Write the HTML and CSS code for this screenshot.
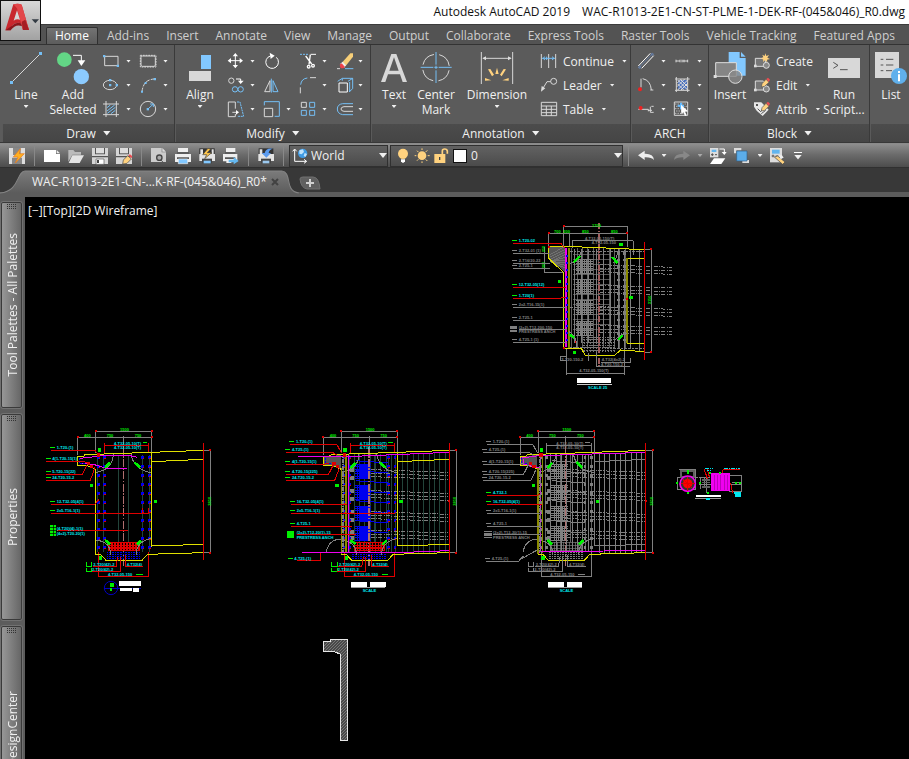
FILE: index.html
```html
<!DOCTYPE html>
<html lang="en">
<head>
<meta charset="utf-8">
<title>Autodesk AutoCAD 2019</title>
<link rel="stylesheet" href="styles.css">
</head>
<body>
<div class="app">
  <header class="titlebar">
    <button class="app-button" aria-label="Application menu">
      <svg class="app-logo" viewBox="0 0 120 120" aria-hidden="true">
        <path d="M13 88 37 10Q52 6 62 11L84 87H66L60 67Q45 62 33 74L29 88Z" fill="#c8282e"/>
        <path d="M37 10Q52 6 62 11L84 87H66L48 22Z" fill="#e2474a"/>
        <path d="M48 28 57 56Q47 53 38 59Z" fill="#d6d6d6"/>
        <path d="M33 74Q45 62 60 67L63 76Q44 68 29 88H13Z" fill="#8c171c"/>
        <path d="M66 87 62 62 73 56 84 87Z" fill="#a51e24"/>
        <path d="M92 55H114L103 67Z" fill="#333b44"/>
      </svg>
    </button>
    <h1 class="title"><span>Autodesk AutoCAD 2019</span><span>WAC-R1013-2E1-CN-ST-PLME-1-DEK-RF-(045&amp;046)_R0.dwg</span></h1>
  </header>

  <nav class="tabs" aria-label="Ribbon tabs">
    <button class="tab active">Home</button><button class="tab">Add-ins</button><button class="tab">Insert</button><button class="tab">Annotate</button><button class="tab">View</button><button class="tab">Manage</button><button class="tab">Output</button><button class="tab">Collaborate</button><button class="tab">Express Tools</button><button class="tab">Raster Tools</button><button class="tab">Vehicle Tracking</button><button class="tab">Featured Apps</button>
  </nav>

  <main class="ribbon">
    <section class="panel">
      <div class="panel-body">
        <button class="big w48"><svg viewBox="30 156 96 96"><path class="g" d="M36 246 121 161"/><path class="fb" d="M30 243h9v9h-9zM117 156h9v9h-9z"/></svg><span>Line</span><i class="caret"></i></button>
        <button class="big w46"><svg viewBox="171 156 96 96"><circle cx="193" cy="179" r="22" fill="#63d686"/><circle cx="244" cy="230" r="23" fill="#8ccbff"/><path class="g w" d="M219 166H244V184"/><path class="fw" d="M233 181H256L244 198Z"/></svg><span>Add<br>Selected</span></button>
        <div class="tools draw-tools">
          <button class="tool" aria-label="Rectangle"><svg viewBox="303 153 60 60"><path class="g" d="M314 169H354V197H314Z"/><path class="fb" d="M309 165h7v7h-7zM350 194h7v7h-7z"/></svg><i class="caret"></i></button>
          <button class="tool" aria-label="Revision cloud"><svg viewBox="414 153 60 60"><rect class="g" x="423" y="168" width="43" height="31" rx="4"/><path class="g" stroke-dasharray="5 3" d="M421 166H468V201H421Z"/></svg><i class="caret"></i></button>
          <button class="tool" aria-label="Ellipse"><svg viewBox="303 225 60 60"><ellipse class="g" cx="330" cy="255" rx="20" ry="14"/><path class="fb" d="M327 237h7v7h-7zM327 252h7v7h-7zM347 252h7v7h-7z"/></svg><i class="caret"></i></button>
          <button class="tool" aria-label="Arc"><svg viewBox="414 225 60 60"><path class="g" stroke-dasharray="12 4" d="M426 275Q430 238 464 237"/><path class="fb" d="M423 272h6v6h-6zM434 246h6v6h-6zM461 234h7v7h-7z"/></svg><i class="caret"></i></button>
          <button class="tool" aria-label="Hatch"><svg viewBox="303 297 60 60"><path class="g" d="M318 303V351M349 303V351M309 312H357M309 344H357"/><path class="b" d="M321 323 331 315M321 333 344 315M322 340 346 322M333 341 346 331"/></svg><i class="caret"></i></button>
          <button class="tool" aria-label="Circle"><svg viewBox="414 297 60 60"><circle class="g" cx="444" cy="327" r="23"/><path class="b" d="M447 324 459 313M450 312H460V321"/><path class="fb" d="M440 324h7v7h-7z"/></svg><i class="caret"></i></button>
        </div>
      </div>
      <h2 class="panel-title">Draw<i class="caret large"></i></h2>
    </section>

    <section class="panel">
      <div class="panel-body">
        <button class="big w50"><svg viewBox="552 156 96 96"><path fill="#82c8ff" d="M603 165H633V207H603Z"/><path fill="#d8d8d8" d="M567 213H633V243H567Z"/></svg><span>Align</span><i class="caret"></i></button>
        <div class="tools modify-tools">
          <button class="tool" aria-label="Move"><svg viewBox="678 153 60 60"><path class="g w" d="M706 164V200M688 182H724"/><path class="fw" d="M698 169 706 159 714 169ZM698 195 706 205 714 195ZM693 174 683 182 693 190ZM719 174 729 182 719 190Z"/></svg><i class="caret"></i></button>
          <button class="tool" aria-label="Rotate"><svg viewBox="786 153 60 60"><path class="g w" d="M811 168A19 19 0 1 0 829 172"/><path class="fw" d="M809 158 824 167 812 177Z"/></svg></button>
          <button class="tool" aria-label="Trim"><svg viewBox="24 153 60 60"><path class="b" stroke-dasharray="6 3" d="M30 163H56"/><path class="g w" d="M62 163H78"/><path class="g w thick" d="M47 168 65 192M61 164 57 194"/><circle class="g w thick" cx="56" cy="200" r="4"/><circle class="g w thick" cx="69" cy="197" r="4"/></svg><i class="caret"></i></button>
          <button class="tool" aria-label="Erase"><svg viewBox="132 153 60 60"><path fill="#f7cf78" d="M157 187 181 160H189V170L167 198Z"/><path fill="#eee" d="M151 191 158 185 168 196 163 203Z"/><path fill="#f0424a" d="M149 194 155 190 165 201 160 205H152Z"/><path class="b" d="M165 206H190"/><path class="g" d="M141 206H150"/></svg><i class="caret"></i></button>
          <button class="tool" aria-label="Copy"><svg viewBox="678 225 60 60"><circle class="g" cx="694" cy="242" r="8"/><path class="g w" d="M708 237H722V243"/><path class="fw" d="M714 242H731L722 252Z"/><circle class="b" cx="705" cy="268" r="8"/><circle class="b" cx="722" cy="268" r="8"/></svg><i class="caret"></i></button>
          <button class="tool" aria-label="Mirror"><svg viewBox="786 225 60 60"><path class="g" d="M794 275 810 242V275Z"/><path class="b" d="M834 275 819 242V275Z"/><path class="b" d="M814 236V278"/></svg></button>
          <button class="tool" aria-label="Fillet"><svg viewBox="24 225 60 60"><path class="b" d="M32 254Q34 236 52 234"/><path class="g" d="M31 262V280M60 233H78"/></svg><i class="caret"></i></button>
          <button class="tool" aria-label="Explode"><svg viewBox="132 225 60 60"><path class="b" d="M143 244 157 235H188V266L177 276M157 235V242M174 244 188 235M179 246V276"/><path class="g w" d="M147 249H172V276H147Z"/></svg><i class="caret"></i></button>
          <button class="tool" aria-label="Stretch"><svg viewBox="678 297 60 60"><path class="g" d="M706 326V306H685V350H706V342M697 337H712"/><path class="fw" d="M708 330 717 337 708 344Z"/><path class="b" stroke-dasharray="6 2" d="M711 306H720L731 349H712"/></svg><i class="caret"></i></button>
          <button class="tool" aria-label="Scale"><svg viewBox="786 297 60 60"><path class="b" d="M793 316V305H838V349H824"/><path class="g" d="M793 325H818V350H793Z"/></svg><i class="caret"></i></button>
          <button class="tool" aria-label="Array"><svg viewBox="24 297 60 60"><path class="g" d="M34 307H49V322H34Z"/><path class="b" d="M59 307H74V322H59ZM34 331H49V346H34ZM59 331H74V346H59Z"/></svg><i class="caret"></i></button>
          <button class="tool" aria-label="Offset"><svg viewBox="132 297 60 60"><path class="b" d="M189 311H158Q142 313 142 327T158 344H189"/><path class="g" d="M189 320H162Q153 321 153 327T162 334H189"/></svg><i class="caret"></i></button>
        </div>
      </div>
      <h2 class="panel-title">Modify<i class="caret large"></i></h2>
    </section>

    <section class="panel">
      <div class="panel-body">
        <button class="big w46"><svg viewBox="267 156 96 96"><path fill="#d8d8d8" fill-rule="evenodd" d="M276 246 307 162H322L354 246H341L333 223H297L289 246ZM301 212H329L315 172Z"/></svg><span>Text</span><i class="caret"></i></button>
        <button class="big w38"><svg viewBox="391 156 96 96"><circle class="g" cx="439" cy="203" r="40" stroke-dasharray="47 16" stroke-dashoffset="-8"/><path class="b" d="M439 156V194M439 211V249M393 202H431M447 202H486M434 202H444M439 197V207"/></svg><span>Center<br>Mark</span></button>
        <button class="big w84"><svg viewBox="573 156 96 96"><path class="g" d="M574 156V252M668 156V252M580 175H662"/><path fill="#ddd" d="M577 175 588 169V181ZM665 175 654 169V181Z"/><path fill="#ffd27f" d="M616 222 621 203 626 222ZM606 229 594 208 601 207 612 224ZM635 229 648 208 641 207 630 224ZM604 241 585 234V242ZM637 241 656 234V242Z"/></svg><span>Dimension</span><i class="caret"></i></button>
        <div class="rows">
          <button class="row-tool"><svg viewBox="747 153 60 60"><path class="g" d="M754 162V204M776 162V204M797 162V204"/><path class="b" d="M756 175H795M765 170 759 175 765 180M786 170 792 175 786 180M770 170V180"/></svg>Continue<i class="caret"></i></button>
          <button class="row-tool"><svg viewBox="747 225 60 60"><circle class="g" cx="791" cy="244" r="9"/><path class="g" d="M782 245H771L757 268"/><path fill="#ddd" d="M753 275 755 258 766 265Z"/></svg>Leader<i class="caret"></i></button>
          <button class="row-tool"><svg viewBox="747 297 60 60"><path class="g" d="M754 307H800V347H754ZM754 318H800M754 328H800M754 338H800M769 318V347M784 318V347"/></svg>Table<i class="caret"></i></button>
        </div>
      </div>
      <h2 class="panel-title">Annotation<i class="caret large"></i></h2>
    </section>

    <section class="panel">
      <div class="panel-body">
        <div class="tools arch-tools">
          <button class="tool" aria-label="Double line"><svg viewBox="108 153 60 60"><path class="g w" d="M115 198 151 160M125 205 161 167"/><path d="M116 204 157 162" stroke="#6d91cc" stroke-width="2"/><circle cx="119" cy="202" r="3" stroke="#6d91cc" fill="none" stroke-width="2"/><circle cx="157" cy="163" r="3" stroke="#6d91cc" fill="none" stroke-width="2"/></svg><i class="caret"></i></button>
          <button class="tool" aria-label="Break line"><svg viewBox="219 153 60 60"><path class="g" d="M231 179V187M231 183H243M243 179V187M249 179V187M255 179V187M250 183H266M266 179V187"/></svg><i class="caret"></i></button>
          <button class="tool" aria-label="Door"><svg viewBox="108 225 60 60"><path class="g" d="M123 262V236M128 236Q152 241 154 270M151 270H160"/><circle cx="120" cy="268" r="6" fill="#f02020"/></svg><i class="caret"></i></button>
          <button class="tool" aria-label="Hatch area"><svg viewBox="219 225 60 60"><path fill="#486fbb" d="M237 240H264V268H237Z"/><path class="g" d="M232 231V276M266 231V276M228 237H272M228 271H272"/><path stroke="#ddd" stroke-width="3" d="M234 250 247 237M234 260 257 237M236 270 266 240M246 270 266 250M236 240 266 270M246 240 266 260M236 252 254 270"/></svg><i class="caret"></i></button>
          <button class="tool" aria-label="Wall opening"><svg viewBox="108 297 60 60"><path class="g" d="M115 328H145V334M154 319H161M161 337H151V320M145 331H156"/><circle cx="122" cy="324" r="6" fill="#f02020"/></svg><i class="caret"></i></button>
          <button class="tool" aria-label="Select similar"><svg viewBox="219 297 60 60"><path class="g" d="M226 306H266V346H226Z"/><path stroke="#ddd" stroke-width="3" stroke-dasharray="3 4" d="M229 312H264M232 319H264M229 326H264M232 333H264M229 340H264"/><path stroke="#62baff" stroke-width="6" d="M236 317H255M246 308V328"/><path fill="#fff" d="M246 314 267 334 258 335 263 346 258 348 253 337 247 343Z"/></svg><i class="caret"></i></button>
        </div>
      </div>
      <h2 class="panel-title">ARCH</h2>
    </section>

    <section class="panel">
      <div class="panel-body">
        <button class="big w42"><svg viewBox="343 156 96 96"><path fill="#82c8ff" d="M387 156H420V174H438V227H387Z"/><path fill="#82c8ff" d="M424 156 438 170H424Z"/><path fill="#858585" stroke="#ddd" stroke-width="3" d="M348 188H410V229H348Z"/><circle cx="407" cy="230" r="20" fill="#888c" stroke="#ddd" stroke-width="3"/><path fill="#ddd" d="M342 225h9v9h-9z"/></svg><span>Insert</span></button>
        <div class="rows block-rows">
          <button class="row-tool"><svg viewBox="456 153 60 60"><path fill="#777" stroke="#ddd" stroke-width="3" d="M466 175H497V199H466Z"/><circle cx="499" cy="196" r="9" fill="#888" stroke="#ddd" stroke-width="3"/><path fill="#ddd" d="M462 194h8v8h-8z"/><path fill="#ffd27f" d="M496 160 499 168 507 165 502 173 510 177 501 179 502 187 495 181 489 186 490 179 483 175 490 172 487 164 494 168Z"/></svg>Create</button>
          <button class="row-tool"><svg viewBox="456 225 60 60"><path fill="#777" stroke="#ddd" stroke-width="3" d="M466 243H490L500 260V270H466Z"/><circle cx="499" cy="267" r="9" fill="#888" stroke="#ddd" stroke-width="3"/><path fill="#ddd" d="M462 266h8v8h-8z"/><path fill="#ffd27f" stroke="#555" stroke-width="2" d="M484 261 486 251 498 238 507 247 494 259Z"/><path fill="#ed4c52" d="M499 237 504 233 510 239 506 246Z"/></svg>Edit<i class="caret"></i></button>
          <button class="row-tool"><svg viewBox="456 297 60 60"><path fill="#e8e8e8" d="M462 307H484L506 329 488 348 470 332 462 320Z"/><path fill="#555" d="M468 312h6v6h-6z"/><path class="k" d="M473 326 482 335 490 324M484 341 497 331"/><path fill="#ffd27f" stroke="#555" stroke-width="2" d="M484 333 486 323 498 310 507 319 494 331Z"/><path fill="#ed4c52" d="M499 309 504 305 510 311 506 318Z"/></svg>Attrib<i class="caret"></i></button>
        </div>
        <button class="big w50"><svg viewBox="687 156 96 96"><path fill="#d8d8d8" d="M687 174H783V234H687Z"/><path class="k" d="M703 187 717 196 703 205M723 209H746"/></svg><span>Run<br>Script...</span></button>
      </div>
      <h2 class="panel-title">Block<i class="caret large"></i></h2>
    </section>

    <section class="panel last">
      <div class="panel-body">
        <button class="big w42"><svg viewBox="825 156 96 96"><path fill="#d8d8d8" d="M825 156H897V234H825Z"/><path class="k" d="M842 178H850M858 178H880M842 195H850M858 195H880M842 212H850M858 212H876"/><circle cx="897" cy="228" r="24" fill="#60b0ec"/><path fill="#fff" d="M894 213H900V219H894ZM894 223H900V244H894Z"/></svg><span>List</span></button>
      </div>
      <h2 class="panel-title"></h2>
    </section>
  </main>

  <div class="quickbar">
    <button class="q" aria-label="AutoSave"><svg viewBox="27 444 48 48"><path fill="#ddd" d="M27 444H75V492H27Z"/><path fill="#888" d="M39 444H62V465H39ZM36 473H66V492H36Z"/><path fill="#ffb020" stroke="#e8791c" stroke-width="2" d="M61 446 40 471H54L46 489 73 461H58Z"/></svg></button>
    <span class="sep"></span>
    <button class="q" aria-label="New"><svg viewBox="132 444 48 48"><path fill="#fff" d="M132 450H168V462H180V486H132Z"/><path fill="#eee" d="M170 450 180 460H170Z"/></svg></button>
    <button class="q" aria-label="Open"><svg viewBox="204 444 48 48"><path fill="#bbb" d="M205 450H220L225 456H243V464H217L205 485Z"/><path fill="#e4e4e4" d="M217 466H252L239 489H206Z"/></svg></button>
    <button class="q" aria-label="Save"><svg viewBox="276 444 48 48"><path fill="#d5d5d5" d="M276 444H324V492H276Z"/><path fill="#555" d="M285 444H315V463H285ZM276 468H324V472H276Z"/><path fill="#ddd" d="M288 444H312V460H288Z"/><path fill="#fff" stroke="#555" stroke-width="2" d="M288 477H312V493H288Z"/><path fill="#444" d="M291 480H297V489H291Z"/></svg></button>
    <button class="q" aria-label="Save as"><svg viewBox="348 444 48 48"><path fill="#d5d5d5" d="M348 444H396V492H348Z"/><path fill="#555" d="M357 444H387V463H357ZM348 468H396V472H348Z"/><path fill="#ddd" d="M360 444H384V460H360Z"/><path fill="#ffd27f" stroke="#444" stroke-width="2" d="M368 492 370 480 383 467 394 477 381 490Z"/><path fill="#ed4c52" d="M385 466 390 463 397 469 394 475Z"/></svg></button>
    <span class="sep"></span>
    <button class="q" aria-label="Plot preview"><svg viewBox="453 444 48 48"><path fill="#ccc" d="M453 444H485V457H498V486H453Z"/><path fill="#ddd" d="M487 444 498 455H487Z"/><circle cx="478" cy="473" r="8" fill="#aaa" stroke="#444" stroke-width="4"/><path class="k" d="M483 480 492 490"/></svg></button>
    <button class="q" aria-label="Plot"><svg viewBox="525 444 48 48"><path fill="#eee" d="M534 444H564V456H534ZM525 462H573V486H525Z"/><path fill="#555" d="M531 457H567V461H531ZM531 472H567V477H531Z"/><path fill="#82c8ff" stroke="#eee" stroke-width="2" d="M535 477H563V491H535Z"/></svg></button>
    <button class="q" aria-label="Batch plot"><svg viewBox="597 444 48 48"><path fill="#333" d="M598 445H644V466H598Z"/><path fill="#e4e4e4" d="M601 448H609V462H601ZM635 448H641V462H635ZM598 462H645V483H598Z"/><path fill="#444" d="M606 476H636V490H606Z"/><path fill="#82c8ff" d="M611 482H632V490H611Z"/><path fill="#ffc64a" stroke="#444" stroke-width="2" d="M624 445 608 464H620L614 476 635 458H622L632 447Z"/></svg></button>
    <button class="q" aria-label="Publish"><svg viewBox="669 444 48 48"><path fill="#eee" d="M678 444H706V456H678ZM669 462H712V484H669Z"/><path fill="#555" d="M675 457H706V461H675ZM675 472H706V477H675Z"/><path fill="#eee" d="M679 477H694V489H679Z"/><path fill="#64b8f0" d="M686 479H701V471L716 483 701 493V487H686Z"/></svg></button>
    <span class="sep"></span>
    <button class="q" aria-label="Page setup"><svg viewBox="774 444 48 48"><path fill="#333" d="M776 445H820V466H776Z"/><path fill="#e4e4e4" d="M779 448H787V462H779ZM775 462H822V483H775Z"/><path fill="#444" d="M783 476H813V490H783Z"/><path fill="#9bc8ee" d="M788 482H808V490H788Z"/><path fill="#5b9bef" d="M785 459 799 473 813 459H806Q807 448 819 446 798 442 794 459Z"/></svg></button>
    <span class="sep"></span>
    <label class="combo world">
      <svg viewBox="9 444 48 48"><circle cx="41" cy="460" r="14" fill="#3f9be4"/><path fill="#bfe2fb" d="M31 451 42 448 45 456 38 463 31 461ZM47 459 54 462 49 471 44 467Z"/><path class="g w" d="M17 449V484H51M11 454 17 447 23 454M45 478 53 484 45 490"/></svg>
      <select aria-label="UCS"><option>World</option></select><i class="caret large"></i>
    </label>
    <label class="combo layer">
      <svg viewBox="309 444 48 48"><circle cx="333" cy="461" r="15" fill="#ffd27f"/><path fill="#ffd27f" d="M326 470H340V476H326Z"/><path fill="#fff" d="M327 478H339V484L335 488H331L327 484Z"/></svg>
      <svg viewBox="364 444 48 48"><circle cx="388" cy="467" r="13" fill="#ffd27f"/><path stroke="#ffd27f" stroke-width="3" d="M388 445V450M388 484V489M366 467H371M405 467H411M373 452 377 456M399 478 404 483M373 482 377 478M399 456 404 451"/></svg>
      <svg viewBox="422 444 48 48"><path fill="#ffd27f" d="M426 462H459V489H426Z"/><path fill="none" stroke="#ffd27f" stroke-width="5" d="M450 462V453Q450 447 457 447T465 453V461"/><path fill="#444" d="M440 471H444V480H440Z"/></svg>
      <span class="swatch"></span>
      <select aria-label="Layer"><option>0</option></select><i class="caret large"></i>
    </label>
    <span class="sep"></span>
    <button class="q" aria-label="Undo"><svg viewBox="117 444 48 48"><path fill="#eee" d="M117 466 137 452V461Q163 460 165 480 157 471 137 472V480Z"/></svg></button>
    <button class="drop" aria-label="Undo list"><i class="caret"></i></button>
    <button class="q" aria-label="Redo"><svg viewBox="225 444 48 48"><path fill="#888" d="M273 466 253 452V461Q227 460 225 480 233 471 253 472V480Z"/></svg></button>
    <button class="drop dim" aria-label="Redo list"><i class="caret"></i></button>
    <button class="q" aria-label="Match properties"><svg viewBox="333 444 48 48"><path fill="#ddd" d="M333 444H358V472H333Z"/><path fill="#62b5ee" d="M338 449H352V456H338Z"/><path class="k" d="M336 464H344M340 460V468M348 464H354"/><path class="g w" d="M361 447H376V456"/><path fill="#fff" d="M368 456H383L376 465ZM345 475H379L367 492H333Z"/></svg></button>
    <button class="q" aria-label="Object order"><svg viewBox="405 444 48 48"><path fill="#ddd" d="M405 444H427V451H412V460H405ZM430 480H450V489H430Z"/><path fill="#5badea" stroke="#315f86" stroke-width="2" d="M413 453H444V483H413Z"/></svg></button>
    <button class="drop" aria-label="Order list"><i class="caret"></i></button>
    <button class="q" aria-label="Properties painter"><svg viewBox="513 444 48 48"><path fill="#ddd" d="M513 444H549V487H513Z"/><path fill="#62b5ee" d="M519 449H542V461H519Z"/><path class="k" d="M518 468H526M522 464V472M530 468H538"/><path fill="#ffd27f" stroke="#444" stroke-width="2" d="M526 471 536 468 558 486 551 493Z"/><path fill="#eee" d="M541 466H549L554 473 544 477Z"/></svg></button>
    <button class="drop custom" aria-label="Customize"><i class="caret large"></i></button>
  </div>

  <div class="files">
    <div class="file-tab">
      <svg class="file-shape" viewBox="0 0 298 24" preserveAspectRatio="none" aria-hidden="true"><defs><linearGradient id="tabfill" x2="0" y2="1"><stop stop-color="#7b7b7b"/><stop offset="1" stop-color="#5c5c5c"/></linearGradient></defs><path fill="url(#tabfill)" stroke="#848484" d="M0 25C20 23 16 4 25 3H281C292 4 283 23 298 25"/></svg>
      <a class="file-name" href="#">WAC-R1013-2E1-CN-...K-RF-(045&amp;046)_R0*</a>
      <button class="close" aria-label="Close drawing"><svg viewBox="0 0 8 8"><path d="M1 1 7 7M7 1 1 7" stroke="#424242" stroke-width="2"/></svg></button>
    </div>
    <button class="new-file" aria-label="New drawing"><svg viewBox="0 0 22 14"><path fill="#606060" stroke="#707070" d="M1 3Q1 1 4 1H14Q20 1 21 13H8Q2 12 1 3Z"/><path stroke="#d0d0d0" stroke-width="2" d="M7 7H15M11 3V11"/></svg></button>
  </div>

  <div class="workspace">
    <aside class="palettes">
      <button class="palette"><i class="grip"></i><span>Tool Palettes - All Palettes</span></button>
      <button class="palette"><i class="grip"></i><span>Properties</span></button>
      <button class="palette"><i class="grip"></i><span>DesignCenter</span></button>
    </aside>
    <section class="viewport">
      <div class="view-controls"><button>[−]</button><button>[Top]</button><button>[2D Wireframe]</button></div>
      <svg class="model" id="model" viewBox="25 197 884 562" preserveAspectRatio="xMinYMin meet" role="img" aria-label="Drawing model space"></svg>
    </section>
  </div>
</div>
<script src="model.js"></script>
</body>
</html>
```
FILE: styles.css
```css
* { box-sizing: border-box; }
body { margin: 0; background: #000; color: #f0f0f0; font: 12px/15px "Open Sans", "Noto Sans", sans-serif; }
button, select { margin: 0; padding: 0; border: 0; background: none; color: inherit; font: inherit; appearance: none; }
svg { display: block; overflow: visible; }
.app { display: flex; flex-direction: column; height: 100vh; overflow: hidden; }

.g, .b, .k { fill: none; stroke: #d8d8d8; stroke-width: 3; }
.b { stroke: #75bff5; }
.k { stroke: #555; }
.w { stroke: #fff; }
.thick { stroke-width: 4; }
.fb { fill: #75bff5; }
.fw { fill: #fff; }

.titlebar { position: relative; display: flex; justify-content: flex-end; flex: none; height: 24px; padding: 0 4px; background: #fff; }
.title { display: flex; gap: 12px; margin: 0; color: #111; font-size: 12px; font-weight: 400; line-height: 24px; white-space: nowrap; }
.app-button { position: absolute; z-index: 2; left: 0; top: 0; width: 41px; height: 41px; border: 1px solid #111; background: linear-gradient(#d8d8d8, #a2a2a2); }
.app-logo { width: 40px; height: 40px; }

.tabs { display: flex; flex: none; height: 21px; padding: 2px 0 0 46px; overflow: hidden; background: #535353; border-top: 1px solid #3c3c3c; border-bottom: 1px solid #333; }
.tab { flex: none; padding: 0 8px 0 9px; color: #cfcfcf; line-height: 17px; white-space: nowrap; }
.tab.active { padding: 0 8px; border: 1px solid #303030; border-bottom: 0; border-radius: 2px 2px 0 0; background: linear-gradient(#737373, #5c5c5c); color: #fff; line-height: 16px; }

.ribbon { display: flex; flex: none; height: 98px; padding-left: 2px; overflow: hidden; background: #5b5b5b; border-bottom: 1px solid #383838; }
.panel { display: flex; flex: none; flex-direction: column; border-right: 1px solid #3a3a3a; }
.panel.last { flex: 1; border: 0; }
.panel-body { display: flex; height: 79px; }
.panel-title { display: flex; align-items: center; justify-content: center; gap: 7px; height: 18px; margin: 0; background: linear-gradient(#4c4c4c, #454545); border-left: 1px solid #5a5a5a; font-size: 12px; font-weight: 400; }
.caret { display: inline-block; flex: none; width: 5px; height: 3px; background: currentColor; clip-path: polygon(0 0, 100% 0, 50% 100%); }
.caret.large { width: 8px; height: 5px; }
.big { display: flex; flex: none; flex-direction: column; align-items: center; padding-top: 7px; text-align: center; white-space: nowrap; }
.big svg { flex: none; width: 32px; height: 32px; margin-bottom: 3px; }
.big .caret { margin-top: 3px; }
.w38 { width: 38px; }
.w42 { width: 42px; }
.w46 { width: 46px; }
.w48 { width: 48px; }
.w50 { width: 50px; }
.w84 { width: 84px; }
.tools { display: grid; align-content: start; grid-auto-rows: 24px; padding-top: 4px; }
.draw-tools { grid-template-columns: 37px 36px; padding-left: 5px; }
.modify-tools { grid-template-columns: repeat(4, 36px); padding-left: 1px; }
.arch-tools { grid-template-columns: repeat(2, 36px); padding-left: 5px; }
.tool { display: flex; align-items: center; gap: 5px; }
.modify-tools .tool { gap: 4px; }
.tool svg, .row-tool svg { flex: none; width: 20px; height: 20px; }
.rows { width: 91px; padding-top: 4px; }
.block-rows { width: 68px; padding-left: 1px; }
.row-tool { display: flex; align-items: center; gap: 4px; height: 24px; white-space: nowrap; }
.row-tool .caret { margin-left: 4px; }

.quickbar { display: flex; align-items: center; flex: none; height: 25px; padding-left: 5px; border-top: 1px solid #8a8a8a; border-bottom: 1px solid #303030; background: linear-gradient(#8e8e8e, #6c6c6c 45%, #4c4c4c); }
.q { display: flex; align-items: center; justify-content: center; flex: none; width: 24px; height: 22px; }
.q svg { width: 16px; height: 16px; }
.sep { flex: none; width: 1px; height: 21px; margin: 0 5px; background: #888; }
.combo { display: flex; align-items: center; flex: none; gap: 3px; height: 22px; padding-left: 2px; border: 1px solid #303030; background: linear-gradient(#626262, #4b4b4b); }
.combo svg { flex: none; width: 16px; height: 16px; }
.combo select { flex: 1; min-width: 0; }
.world { width: 99px; margin-right: 2px; }
.layer { width: 233px; padding-left: 4px; }
.swatch { flex: none; width: 14px; height: 14px; margin: 0 1px; border: 1px solid #111; background: #fff; }
.drop { display: flex; align-items: center; justify-content: center; flex: none; width: 12px; height: 22px; }
.drop.dim { color: #aaa; }
.drop.custom { flex-direction: column; gap: 2px; width: 16px; }
.drop.custom::before { width: 8px; height: 1px; background: #fff; content: ""; }

.files { display: flex; align-items: flex-end; flex: none; height: 29px; border-bottom: 5px solid #5c5c5c; background: #383838; }
.file-tab { position: relative; display: flex; align-items: center; gap: 4px; height: 24px; padding: 3px 20px 0 32px; }
.file-shape { position: absolute; left: 0; top: 0; width: 100%; height: 24px; }
.file-name { position: relative; color: #f0f0f0; text-decoration: none; white-space: nowrap; }
.close { position: relative; width: 8px; height: 8px; }
.new-file { width: 22px; height: 14px; margin: 0 0 2px; }

.workspace { display: flex; flex: 1; min-height: 0; }
.palettes { display: flex; flex: none; flex-direction: column; gap: 6px; width: 25px; padding: 5px 3px 0 1px; overflow: hidden; background: #5c5c5c; }
.palette { position: relative; display: flex; align-items: center; justify-content: center; flex: none; height: 206px; border: 1px solid #3a3a3a; border-radius: 2px; outline: 1px solid #727272; background: linear-gradient(90deg, #979797, #666); }
.palette span { padding-right: 2px; writing-mode: vertical-rl; transform: rotate(180deg); white-space: nowrap; }
.grip { position: absolute; top: 1px; left: 5px; width: 10px; height: 5px; background: repeating-linear-gradient(90deg, #333 0 1px, transparent 1px 2px); mask: repeating-linear-gradient(#000 0 1px, transparent 1px 2px); }
.viewport { position: relative; flex: 1; min-width: 0; background: #000; }
.view-controls { position: absolute; left: 3px; top: 6px; display: flex; }
.model { width: 100%; height: 100%; }
.model path { shape-rendering: crispEdges; }
.model text { font-family: "Liberation Sans", sans-serif; font-weight: 700; }
```
FILE: model.js
```js
const NS = 'http://www.w3.org/2000/svg';
const model = document.getElementById('model');
const GREY = '#808080', DARK = '#606060', RED = '#e00000', YEL = '#e0e000', OLIVE = '#8a8a00',
  MAG = '#f000f0', CYAN = '#00e8f0', GRN = '#00f000', BLUE = '#0000f0', PINE = '#23443a';

function node(parent, name, attrs) {
  const n = document.createElementNS(NS, name);
  for (const k in attrs) n.setAttribute(k, attrs[k]);
  parent.append(n);
  return n;
}
function sheet(x, y, w, h) {
  return node(model, 'svg', { x, y, width: w, height: h, viewBox: `0 0 ${w * 3} ${h * 3}` });
}
function line(s, color, d, w = 3, dash = 'none') {
  node(s, 'path', { d, fill: 'none', stroke: color, 'stroke-width': w, 'stroke-dasharray': dash });
}
function fill(s, color, d) { node(s, 'path', { d, fill: color }); }
function text(s, color, x, y, str, turn) {
  const t = node(s, 'text', { x, y: y + 5, fill: color, 'font-size': 12 });
  if (turn) t.setAttribute('transform', `rotate(${turn} ${x} ${y})`);
  t.textContent = str;
}
function dots(s, color, pts, r = 3) {
  fill(s, color, pts.map(([x, y]) => `M${x - r} ${y - r}h${2 * r}v${2 * r}h${-2 * r}z`).join(''));
}
function every(a, b, step, f) { let d = ''; for (let v = a; v <= b; v += step) d += f(v); return d; }
// label row: marker, tag, leader under the tag, kink to target
function label(s, x, y, str, tint, lead, endX, endY) {
  line(s, tint === GREY ? GREY : GRN, `M${x - 20} ${y}h15`);
  text(s, tint, x, y, str);
  line(s, lead, `M${x - 18} ${y + 9}H${endX - 14}L${endX} ${endY}`);
}
function tendons(s, x1, x2, rows) {
  rows.forEach(y => [0, 11, 21].forEach(o =>
    line(s, GREY, `M${x1} ${y + o - 3}L${x2} ${y + o + 5}`, 3, '12 4 3 4')));
}
function coil(s, color, x, y, w = 40, h = 42) {
  line(s, color, every(x, x + w, 6, v => `M${v} ${y}V${y + h}`) + every(y, y + h, 7, v => `M${x - 8} ${v}h${w + 10}`), 3);
}

// full-depth section, upper right
{
  const s = sheet(500, 215, 190, 180);
  line(s, GREY, 'M191 34H382M146 55H382M146 55V95M191 34V95M207 55V95M382 34V95M217 77H400M217 77V100M400 77V120M134 95V173M134 173H190M453 103V412M420 103H455M434 412H455M199 400V480M372 400V480M199 474H372');
  line(s, DARK, every(215, 375, 16, v => `M${v} 100V400`), 3);
  line(s, GREY, every(222, 345, 22, v => `M${v} 103V385`) + 'M355 100V400M373 105V400M390 105V400M418 104V408', 3);
  line(s, GREY, every(118, 350, 15, v => `M220 ${v}H330`), 2);
  line(s, GREY, 'M210 108H432M210 278H378M208 396L432 402', 3, '8 3');
  [132, 194, 257, 318].forEach(y => coil(s, GREY, 236, y));
  line(s, '#777', every(366, 412, 8, v => `M250 ${v}H345`) + every(252, 345, 9, v => `M${v} 365V415`), 3, '5 3');
  tendons(s, 300, 515, [152, 214, 278, 334]);
  dots(s, GREY, [355, 373].flatMap(x => Array.from({ length: 14 }, (_, i) => [x, 115 + i * 20])), 4);
  line(s, '#a05c5c', 'M297 25V460', 5, '18 4 5 4');
  fill(s, '#555', 'M148 97H195V172L148 130Z');
  line(s, GREY, every(100, 165, 8, v => `M150 ${Math.min(v + 18, 140)}L195 ${v - 5}`), 2);
  line(s, YEL, 'M190 95H146V130L191 173V400L245 402L255 420H345L362 405L434 410M175 93L435 104M380 130H435M380 385H435');
  line(s, OLIVE, 'M207 100V400M382 130V385', 6);
  line(s, MAG, 'M199 98V395', 6);
  dots(s, BLUE, Array.from({ length: 13 }, (_, i) => [200, 122 + i * 21]));
  dots(s, RED, [[146, 55], [191, 34], [382, 55], [453, 103], [453, 412], [146, 95], [191, 400], [229, 380], [382, 253]]);
  line(s, RED, 'M434 82V435', 4);
  line(s, GREY, 'M210 145Q240 140 244 105M340 145Q350 130 355 103M207 350Q232 365 230 400M340 385Q350 360 380 355');
  [[162, 50, '700'], [190, 50, '200'], [246, 50, '850'], [333, 50, '850'], [276, 31, '1700']].forEach(a => text(s, GRN, ...a));
  text(s, GRN, 130, 112, '250', -90); text(s, GRN, 130, 160, '300', -90); text(s, GRN, 448, 268, '3150', -90);
  line(s, GRN, 'M222 142L240 123M336 126L353 145M208 358L223 368M355 375L369 361', 7);
  dots(s, GRN, [[363, 89], [179, 200], [393, 247], [223, 413]], 5);
  text(s, GREY, 255, 69, '4-T32-05-150(T)'); text(s, GREY, 275, 83, '4-T32-05-150');
  label(s, 56, 76, '1-T20-02', CYAN, RED, 196, 100);
  label(s, 56, 106, '2-T32-01 (1)', GREY, GREY, 146, 115);
  label(s, 56, 137, '2-T16/20-22', GREY, GREY, 150, 146);
  label(s, 56, 152, '2-T25-1', GREY, GREY, 150, 161);
  label(s, 56, 209, '12-T32-05(12)', CYAN, RED, 198, 216);
  label(s, 56, 240, '1-T20(1)', CYAN, RED, 198, 248);
  label(s, 56, 269, '2x2-T16-15(1)', GREY, GREY, 200, 278);
  label(s, 56, 307, '2-T25-1', GREY, GREY, 195, 316);
  text(s, GREY, 56, 337, '(2x2)-T12-200-150'); text(s, GREY, 56, 350, 'PRESTRESS ANCH');
  line(s, GREY, every(333, 350, 4, v => `M30 ${v}H52`) + 'M56 343H200');
  label(s, 56, 374, '4-T25-1 (1)', GREY, GREY, 200, 382);
  text(s, GREY, 184, 432, '2-T20-150-2'); text(s, GREY, 305, 434, '4-T32(4x2)-2'); text(s, GREY, 303, 448, '4-T20-150-2');
  line(s, GREY, 'M182 425h18v12h-18zM264 415V438M290 410V453H390M390 430V445M303 442H390');
  text(s, GREY, 238, 466, '4-T32-05-150(T)');
  fill(s, '#fff', 'M231 489H333V504H231Z'); line(s, '#ccc', 'M231 508H336');
  text(s, CYAN, 264, 516, 'SCALE 25');
}

// typical sections, lower row; dx moves the girder within its sheet
function section(s, dx, mode) {
  const X = v => v + dx;
  const full = mode !== 'plain', grey = mode === 'grey';
  const rebar = grey ? GREY : RED, tag = grey ? GREY : CYAN;
  line(s, GREY, `M${X(167)} 34H${X(335)}M${X(113)} 51H${X(335)}M${X(113)} 51V105M${X(167)} 30V100M${X(335)} 30V100M${X(250)} 48V80M${X(511)} 90V398M${X(490)} 90H${X(513)}M${X(490)} 398H${X(513)}`);
  line(s, rebar, `M${X(193)} 76H${X(326)}M${X(193)} 70V100M${X(326)} 70V100M${X(176)} 395V472M${X(326)} 395V472M${X(176)} 469H${X(326)}`);
  line(s, grey ? DARK : PINE, `M${X(190)} 105V395M${X(235)} 105V365M${X(265)} 105V365M${X(308)} 105V395M${X(173)} 105V395M${X(328)} 105V395`);
  if (full) {
    const inner = grey ? GREY : PINE;
    line(s, inner, every(X(205), X(320), 16, v => `M${v} 103V395`) + every(X(350), X(490), 16, v => `M${v} 98V398`), 3);
    line(s, grey ? GREY : BLUE, every(122, 350, 30, v => `M${X(210)} ${v}L${X(308)} ${v + 7}`));
    [133, 196, 258, 318].forEach(y => coil(s, grey ? GREY : BLUE, X(215), y));
    if (!grey) [133, 196, 258, 318].forEach(y => fill(s, BLUE, `M${X(222)} ${y}h30v42h-30z`));
    tendons(s, X(255), X(488), [152, 215, 278, 334]);
    dots(s, GREY, [150, 175, 212, 238, 275, 300, 335, 355].map(y => [X(200), y]), 6);
  }
  line(s, '#b07070', `M${X(250)} 80V440`, 4, '24 4 5 4');
  const block = grey ? GREY : RED;
  line(s, block, every(368, 392, 8, v => `M${X(205)} ${v}H${X(298)}`) + every(X(207), X(298), 9, v => `M${v} 366V393`), grey ? 2 : 4);
  line(s, grey ? GREY : BLUE, every(398, 417, 6, v => `M${X(200)} ${v}H${X(304)}`), 4, '5 3');
  const col = Array.from({ length: 11 }, (_, i) => 113 + i * 27);
  const pts = [176, 193, 308, 328].flatMap(x => col.map(y => [X(x), y]));
  dots(s, grey ? GREY : BLUE, pts, 4);
  dots(s, grey ? GREY : RED, pts.map(([x, y]) => [x + 2, y + 2]), 2);
  line(s, GREY, `M${X(220)} 100Q${X(220)} 148 ${X(167)} 158M${X(273)} 100Q${X(280)} 150 ${X(335)} 158M${X(167)} 360Q${X(212)} 365 ${X(212)} 405M${X(335)} 355Q${X(288)} 365 ${X(288)} 405`);
  if (full) { fill(s, '#555', `M${X(115)} 110L${X(165)} 105V145L${X(115)} 134Z`); line(s, GREY, `M${X(122)} 396Q${X(130)} 355 ${X(170)} 358`); }
  line(s, YEL, `M${X(135)} 104L${X(335)} 97L${X(490)} 91M${X(135)} 104L${X(130)} 110H${X(113)}V136H${X(140)}L${X(167)} 148V403H${X(182)}L${X(197)} 420H${X(307)}L${X(322)} 403L${X(490)} 398`);
  line(s, grey ? GREY : YEL, `M${X(335)} 97V378L${X(490)} 373M${X(335)} 125L${X(490)} 118`);
  if (full) {
    line(s, OLIVE, `M${X(167)} 145V402M${X(180)} 106V398`, 5);
    line(s, MAG, grey ? 'M135 115L190 107L514 97M195 105V396L514 391M145 116V132L196 145' : 'M55 109L200 110L508 97M205 105V398M65 398H350L508 392');
    line(s, GREY, `M${X(172)} 110V395`, 5, '5 2');
  } else line(s, MAG, 'M120 115L190 107H270L292 112M120 130L160 133L195 144L260 147');
  line(s, BLUE, `M${X(118)} 114V130H${X(138)}`, 3, '6 3');
  dots(s, RED, [[X(145), 130], [X(155), 139], [X(176), 105]], 5);
  line(s, RED, `M${X(490)} 69V420`, 3);
  dots(s, RED, [[X(113), 51], [X(167), 34], [X(335), 34], [X(335), 51], [X(490), 243], [X(511), 90], [X(511), 398]]);
  [[132, 47, '400'], [200, 47, '750'], [284, 47, '750'], [240, 29, '1500']].forEach(([x, y, t]) => text(s, GRN, X(x), y, t));
  text(s, GRN, X(507), 257, '2810', -90);
  line(s, GRN, `M${X(195)} 144L${X(210)} 128M${X(283)} 127L${X(300)} 143M${X(195)} 360L${X(210)} 373M${X(290)} 374L${X(303)} 361`, 8);
  dots(s, GRN, [[X(178), 90], [X(154), 196], [X(346), 244], [X(182), 414]], 5);
  text(s, tag, X(222), 69, '4-T32-05-10(T)'); text(s, tag, X(222), 82, '4-T32-05-10(T)');
  text(s, tag, X(160), 434, '2-T20(42)-2'); text(s, tag, X(156), 449, '2-T20(42)-2');
  text(s, tag, X(260), 434, '4-T32(4)'); text(s, tag, X(204), 463, '4-T32-05-150');
  const mk = grey ? GREY : GRN;
  line(s, mk, `M${X(138)} 427V438H${X(154)}V427M${X(138)} 444V453H${X(154)}V444M${X(308)} 68H${X(322)}M${X(288)} 463H${X(308)}`);
  line(s, rebar, `M${X(158)} 440H${X(228)}L${X(233)} 410M${X(155)} 455H${X(240)}V410M${X(256)} 406V440H${X(310)}`);
}

{
  const s = sheet(40, 420, 190, 180);
  section(s, 0, 'plain');
  label(s, 50, 82, '1-T20-(1)', CYAN, RED, 178, 106);
  label(s, 37, 116, '4(1-T20-15(1)', CYAN, RED, 145, 128);
  label(s, 37, 153, '5-T20-15(22)', CYAN, RED, 142, 132);
  label(s, 37, 172, '24-T20-15-2', CYAN, RED, 165, 142);
  label(s, 50, 245, '12-T32-05(4(1)', CYAN, RED, 177, 238);
  label(s, 50, 272, '2x5-T16-1(1)', CYAN, RED, 177, 281);
  line(s, RED, 'M177 281H307V265M326 265V281H307M50 332H265');
  text(s, CYAN, 50, 325, '(4-T20)(4)-1(1)'); text(s, CYAN, 50, 340, '(4x2)-T20-20(1)');
  fill(s, GRN, 'M30 315h18v34h-18z'); line(s, '#000', 'M30 323h18M30 332h18M30 340h18M39 315v34', 2);
  line(s, '#0000c0', 'M191 504H303'); node(s, 'circle', { cx: 213, cy: 504, r: 20, fill: 'none', stroke: '#0000c0', 'stroke-width': 3 });
  fill(s, GRN, 'M209 489h13v12h-13zM209 504h7v9h-7z');
  fill(s, '#fff', 'M237 484H303V498H237ZM240 505H276V513H240ZM280 505H297V516H280Z');
}
{
  const s = sheet(280, 420, 190, 180);
  section(s, 17, 'color');
  label(s, 48, 65, '1-T20-(1)', CYAN, RED, 185, 100);
  label(s, 36, 87, '4-T25-(1)', CYAN, RED, 170, 105);
  label(s, 36, 123, '4(1-T20-15(1)', CYAN, RED, 148, 130);
  label(s, 36, 153, '4-T20-15(225)', CYAN, RED, 160, 135);
  label(s, 36, 172, '24-T20-15-2', CYAN, RED, 178, 145);
  label(s, 50, 245, '16-T32-05(4(1)', CYAN, RED, 200, 254);
  label(s, 50, 272, '2x5-T16-1(1)', CYAN, RED, 345, 280);
  label(s, 50, 310, '4-T25-1', CYAN, RED, 215, 319);
  text(s, CYAN, 50, 337, '(2x2)-T12-20(1)-15'); text(s, CYAN, 50, 351, 'PRESTRESS ANCH');
  line(s, RED, 'M50 344H228M50 422H122V398');
  fill(s, GRN, 'M22 333h21v21h-21z');
  text(s, CYAN, 43, 415, '4-T25-(1)'); line(s, GRN, 'M24 415h15');
  fill(s, '#fff', 'M213 486H261V501H213ZM270 486H318V501H270Z');
  line(s, '#999', 'M213 503H315');
  text(s, CYAN, 248, 511, 'SCALE');
}
{
  const s = sheet(475, 420, 190, 180);
  section(s, 22, 'grey');
  label(s, 53, 65, '1-T20-(1)', GREY, GREY, 188, 100);
  label(s, 41, 87, '4-T25-(1)', GREY, GREY, 175, 105);
  label(s, 41, 123, '4(1-T20-15(1)', GREY, GREY, 148, 130);
  label(s, 41, 153, '4-T20-15(225)', GREY, GREY, 160, 135);
  label(s, 41, 172, '24-T20-15-2', GREY, GREY, 182, 150);
  label(s, 54, 217, '4-T32-1', CYAN, RED, 196, 224);
  label(s, 54, 245, '16-T32-05(4(1)', CYAN, RED, 200, 254);
  label(s, 54, 272, '2x5-T16-1(1)', GREY, GREY, 200, 281);
  label(s, 54, 310, '4-T25-1', GREY, GREY, 200, 319);
  text(s, GREY, 54, 338, '(2x2)-T12-20(1)-15'); text(s, GREY, 54, 351, 'PRESTRESS ANCH');
  line(s, GREY, every(335, 354, 4, v => `M27 ${v}H50`) + 'M54 344H200');
  label(s, 50, 415, '4-T25-(1)', GREY, GREY, 145, 408);
  line(s, GREY, 'M132 421L190 388');
  fill(s, '#fff', 'M219 486H267V501H219ZM276 486H321V501H276Z');
  line(s, '#999', 'M219 503H321');
  text(s, CYAN, 254, 511, 'SCALE');
}
// anchorage details
{
  const s = sheet(660, 450, 100, 60);
  line(s, GREY, 'M57 58H107V118H52V82H115M118 82H150M118 103H245M208 76H245V124H208M122 82V118M140 75V130M132 85V115M148 70H210M215 98H240');
  line(s, DARK, 'M62 62H102V80H62ZM125 90H150M125 97H150M125 110H150', 5);
  node(s, 'circle', { cx: 83, cy: 101, r: 23, fill: '#333', stroke: MAG, 'stroke-width': 5 });
  node(s, 'circle', { cx: 83, cy: 101, r: 14, fill: '#ff0000' });
  line(s, RED, 'M83 80V122M62 101H104M132 56L143 88M141 56L148 80M190 58L182 80M190 58H240M212 100L218 128M69 88L97 115');
  fill(s, MAG, 'M152 70H209V124H152Z');
  line(s, '#a000a0', every(162, 205, 10, v => `M${v} 74V120`), 2);
  line(s, CYAN, 'M135 55H158M142 61H155M192 55H240', 5, '5 2');
  fill(s, CYAN, 'M222 126H242V140H226Z');
  dots(s, GRN, [[52, 100], [83, 62], [83, 69], [120, 100], [150, 68], [180, 69], [228, 100], [240, 100], [84, 128], [143, 128]], 3);
  fill(s, '#fff', 'M108 135H183V142H108Z'); line(s, '#999', 'M105 145H183');
  line(s, CYAN, 'M138 147H150', 5);
}
// parapet profile
{
  const s = sheet(300, 620, 80, 139);
  const outline = 'M70 63H92V57H141V360H122V103L101 94H70Z';
  const clip = node(s, 'clipPath', { id: 'profile' });
  node(clip, 'path', { d: outline });
  fill(s, '#484848', outline);
  const hatch = node(s, 'g', { 'clip-path': 'url(#profile)' });
  line(hatch, '#777', every(60, 440, 9, v => `M60 ${v + 30}L145 ${v - 55}`), 3);
  line(s, '#e6e6e6', outline);
}
```
